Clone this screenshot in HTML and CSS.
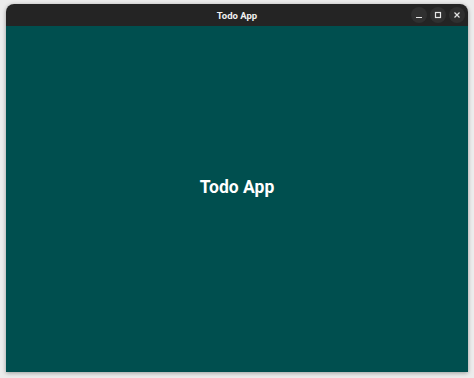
FILE: index.html
```html
<!DOCTYPE html>
<html>
<head>
<meta charset="utf-8">
<link rel="stylesheet" href="styles.css">
</head>
<body>
<div class="window">
  <div class="titlebar">
    <div class="title">Todo App</div>
    <div class="controls">
      <span class="btn"><svg width="16" height="16" viewBox="0 0 16 16"><path d="M5 10.5h6" stroke="#e6e6e6" stroke-width="1.2"/></svg></span>
      <span class="btn"><svg width="16" height="16" viewBox="0 0 16 16"><rect x="5.5" y="5.5" width="5" height="5" fill="none" stroke="#e6e6e6" stroke-width="1.2"/></svg></span>
      <span class="btn"><svg width="16" height="16" viewBox="0 0 16 16"><path d="M5.5 5.5l5 5M10.5 5.5l-5 5" stroke="#e6e6e6" stroke-width="1.2"/></svg></span>
    </div>
  </div>
  <div class="content">
    <h1 class="heading">Todo App</h1>
  </div>
</div>
</body>
</html>
```
FILE: styles.css
```css
html, body {
  margin: 0;
  padding: 0;
  width: 474px;
  height: 378px;
  background: #ececec;
  overflow: hidden;
}
body {
  padding: 4px 6px 6px 6px;
  box-sizing: border-box;
  font-family: Roboto, "Noto Sans", sans-serif;
}
.window {
  height: 100%;
  display: flex;
  flex-direction: column;
  border-radius: 8px 8px 0 0;
  overflow: hidden;
  box-shadow: 0 1px 4px rgba(0,0,0,0.35);
}
.titlebar {
  height: 22px;
  background: #242424;
  position: relative;
  display: flex;
  align-items: center;
  justify-content: center;
  flex-shrink: 0;
}
.title {
  color: #f0f0f0;
  font-size: 9.5px;
  font-weight: 700;
}
.controls {
  position: absolute;
  right: 3px;
  top: 3px;
  display: flex;
  gap: 3px;
}
.btn {
  width: 16px;
  height: 16px;
  border-radius: 50%;
  background: #303030;
  display: flex;
}
.content {
  flex: 1;
  background: #004f4f;
  display: flex;
  align-items: center;
  justify-content: center;
  padding-bottom: 24px;
}
.heading {
  margin: 0;
  color: #ffffff;
  font-size: 17.5px;
  font-weight: 700;
}
```
